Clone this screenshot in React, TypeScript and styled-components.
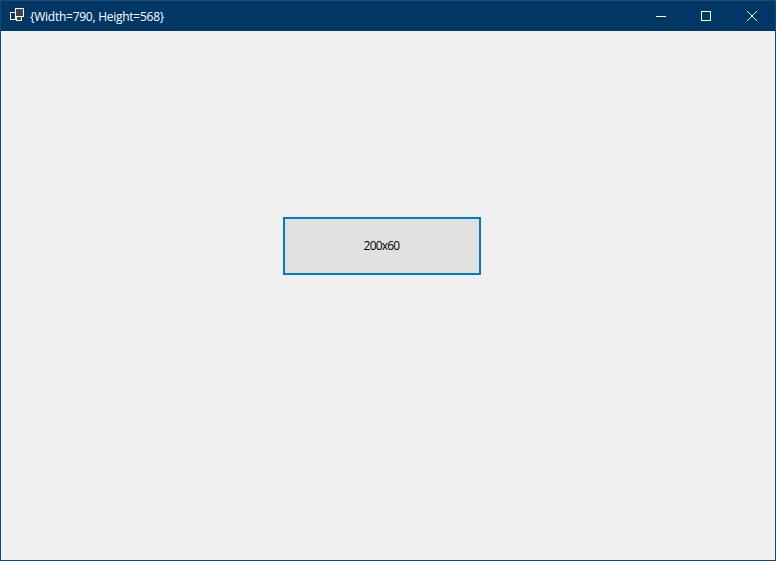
import styled, { createGlobalStyle } from "styled-components";

const GlobalStyle = createGlobalStyle`
  html, body {
    margin: 0;
    padding: 0;
    background: #f0f0f0;
  }
`;

const Window = styled.div`
  width: 776px;
  height: 561px;
  box-sizing: border-box;
  display: flex;
  flex-direction: column;
  border: 1px solid #0b4a7c;
  border-top-color: #1a4a72;
  font-family: "Open Sans", "Noto Sans", "Liberation Sans", sans-serif;
`;

const TitleBar = styled.div`
  height: 30px;
  flex: none;
  display: flex;
  align-items: center;
  background: #003764;
  color: #ffffff;
`;

const AppIcon = styled.svg`
  width: 16px;
  height: 16px;
  margin-left: 8px;
  flex: none;
`;

const Title = styled.span`
  flex: 1;
  margin-left: 5px;
  font-size: 12px;
  letter-spacing: -0.26px;
  white-space: nowrap;
`;

const Controls = styled.div`
  display: flex;
  height: 100%;
`;

const ControlButton = styled.div<{ $nudge?: number }>`
  width: 46px;
  height: 100%;
  box-sizing: border-box;
  padding-left: ${({ $nudge }) => $nudge || 0}px;
  display: flex;
  align-items: center;
  justify-content: center;
`;

const Content = styled.div`
  flex: 1;
  display: flex;
  justify-content: flex-start;
  padding: 186px 0 0 282px;
  background: #f0f0f0;
`;

const SizeButton = styled.button`
  width: 198px;
  height: 58px;
  box-sizing: border-box;
  border: 2px solid #0078d7;
  background: #e1e1e1;
  color: #000000;
  font-family: inherit;
  font-size: 12px;
  letter-spacing: -0.8px;
  padding: 0 1px 2px 0;
`;

function App() {
  return (
    <>
      <GlobalStyle />
      <Window>
        <TitleBar>
          <AppIcon viewBox="0 0 16 16">
            <rect x="1.5" y="4.5" width="5" height="7" fill="#003764" stroke="#ffffff" />
            <rect x="6.5" y="0.5" width="8" height="8" fill="#444444" stroke="#ffffff" />
            <rect x="7.5" y="8.5" width="5" height="4" fill="#444444" stroke="#ffffff" />
          </AppIcon>
          <Title>{"{Width=790, Height=568}"}</Title>
          <Controls>
            <ControlButton $nudge={2}>
              <svg width="10" height="10" viewBox="0 0 10 10">
                <path d="M0 5.5H10" stroke="#ffffff" fill="none" />
              </svg>
            </ControlButton>
            <ControlButton>
              <svg width="10" height="10" viewBox="0 0 10 10">
                <rect x="0.5" y="0.5" width="9" height="9" stroke="#ffffff" fill="none" />
              </svg>
            </ControlButton>
            <ControlButton>
              <svg width="10" height="10" viewBox="0 0 10 10">
                <path d="M0 0L10 10M10 0L0 10" stroke="#ffffff" fill="none" />
              </svg>
            </ControlButton>
          </Controls>
        </TitleBar>
        <Content>
          <div>
            <SizeButton>200x60</SizeButton>
          </div>
        </Content>
      </Window>
    </>
  );
}

export default App;
